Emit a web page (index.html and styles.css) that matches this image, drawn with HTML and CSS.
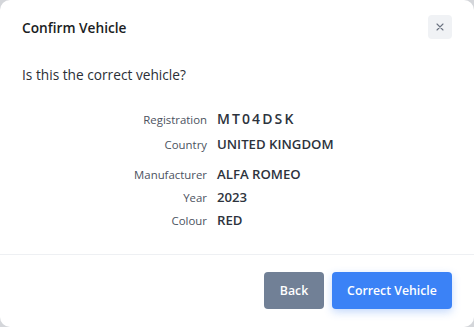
FILE: index.html
```html
<!DOCTYPE html>
<html>
<head>
<meta charset="utf-8">
<link rel="stylesheet" href="styles.css">
</head>
<body>
<div class="modal">
  <div class="header">
    <h2 class="title">Confirm Vehicle</h2>
    <button class="close" aria-label="Close">
      <svg width="8" height="8" viewBox="0 0 8 8"><path d="M1 1L7 7M7 1L1 7" stroke="#6b7280" stroke-width="1.1" stroke-linecap="round"/></svg>
    </button>
  </div>
  <div class="body">
    <p class="question">Is this the correct vehicle?</p>
    <div class="details">
      <div class="group first">
        <span class="label">Registration</span><span class="value reg">MT04DSK</span>
        <span class="label">Country</span><span class="value">UNITED KINGDOM</span>
      </div>
      <div class="group">
        <span class="label">Manufacturer</span><span class="value">ALFA ROMEO</span>
        <span class="label">Year</span><span class="value">2023</span>
        <span class="label">Colour</span><span class="value">RED</span>
      </div>
    </div>
  </div>
  <div class="footer">
    <button class="btn back">Back</button>
    <button class="btn primary">Correct Vehicle</button>
  </div>
</div>
</body>
</html>
```
FILE: styles.css
```css
html, body {
  margin: 0;
  padding: 0;
  background: #d4d6da;
}
body {
  font-family: "Open Sans", "Noto Sans", sans-serif;
  width: 474px;
  height: 327px;
  overflow: hidden;
}
.modal {
  width: 474px;
  height: 327px;
  background: #ffffff;
  border-radius: 10px;
  display: flex;
  flex-direction: column;
  box-sizing: border-box;
}
.header {
  display: flex;
  justify-content: space-between;
  align-items: center;
  padding: 15px 22px 0 22px;
  height: 24px;
}
.title {
  margin: 0;
  font-size: 13.7px;
  font-weight: 600;
  color: #1a1d23;
}
.close {
  width: 24px;
  height: 24px;
  border: none;
  border-radius: 4px;
  background: #f0f2f5;
  display: flex;
  align-items: center;
  justify-content: center;
  padding: 0;
}
.body {
  padding: 0 22px;
  flex: 1;
}
.question {
  margin: 26px 0 0 0;
  font-size: 13.7px;
  color: #2b2f36;
  line-height: 20px;
}
.details {
  margin-top: 23px;
  display: flex;
  flex-direction: column;
  gap: 9px;
}
.group {
  display: grid;
  grid-template-columns: 185px auto;
  column-gap: 10px;
  row-gap: 2px;
  align-items: baseline;
}
.group.first {
  row-gap: 3.5px;
}
.label {
  text-align: right;
  font-size: 11.4px;
  color: #4b5260;
  line-height: 21px;
}
.value {
  font-size: 13.2px;
  font-weight: 600;
  color: #2d333d;
  line-height: 21px;
}
.reg {
  font-size: 14px;
  letter-spacing: 2.1px;
}
.footer {
  border-top: 1px solid #eef0f3;
  height: 73px;
  box-sizing: border-box;
  display: flex;
  justify-content: flex-end;
  align-items: flex-start;
  padding: 17px 22px 0 0;
  gap: 8px;
}
.btn {
  font-family: "Open Sans", "Noto Sans", sans-serif;
  height: 37px;
  border: none;
  border-radius: 4px;
  color: #ffffff;
  font-size: 12.3px;
  font-weight: 600;
  padding: 0;
}
.back {
  width: 60px;
  background: #718096;
}
.primary {
  width: 120px;
  background: #3b82f6;
  box-shadow: 0 3px 8px rgba(59, 130, 246, 0.3);
}
```
